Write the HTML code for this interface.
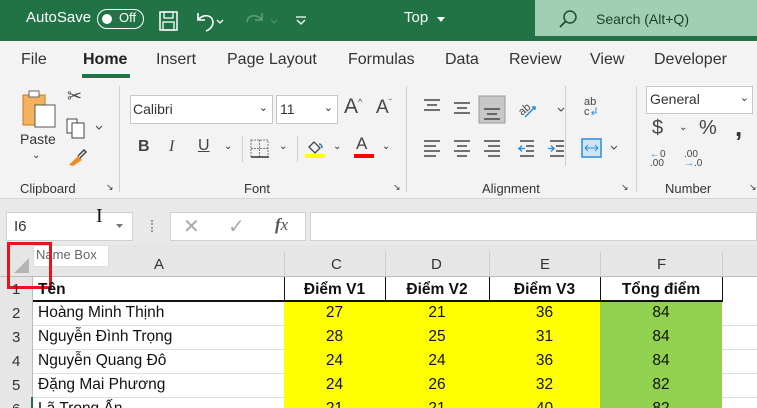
<!DOCTYPE html>
<html style="width:757px;height:408px;overflow:hidden"><head><meta charset="utf-8"><style>
*{box-sizing:border-box;margin:0;padding:0}
body{width:757px;height:408px;overflow:hidden;background:#f3f3f3;font-family:"Segoe UI","Liberation Sans","DejaVu Sans",sans-serif;position:relative;color:#333}
.a{position:absolute}
.t{font-size:16px;color:#333}
.cell{position:absolute;font-size:15.5px;color:#111;font-family:"Liberation Sans",sans-serif}
</style></head><body>
<div class="a" style="left:0;top:0;width:757px;height:41px;background:#217346"></div>
<div class="a" style="left:26px;top:9px;color:#fff;font-size:15px">AutoSave</div>
<div class="a" style="left:97px;top:9px;width:47px;height:20px;border:1.5px solid #fff;border-radius:10px"></div>
<div class="a" style="left:102px;top:14px;width:10px;height:10px;background:#fff;border-radius:50%"></div>
<div class="a" style="left:119px;top:10px;color:#fff;font-size:13px">Off</div>
<svg class="a" style="left:158px;top:10px" width="22" height="22"><rect x="2" y="2" width="17" height="18" fill="none" stroke="#fff" stroke-width="1.5"/><rect x="6" y="2" width="9" height="6" fill="none" stroke="#fff" stroke-width="1.3"/><rect x="5" y="12" width="11" height="8" fill="none" stroke="#fff" stroke-width="1.3"/></svg>
<svg class="a" style="left:194px;top:8px" width="40" height="26"><path d="M4 5v7h7M4 12c5-6 14-6 15 2c0 5-4 8-7 9" fill="none" stroke="#fff" stroke-width="1.6"/><path d="M23 12l3 3l3-3" fill="none" stroke="#fff" stroke-width="1.3"/></svg>
<svg class="a" style="left:242px;top:8px" width="40" height="26"><path d="M20 5v7h-7M20 12c-5-6-14-6-15 2" fill="none" stroke="#5f9d7a" stroke-width="1.6"/><path d="M29 12l3 3l3-3" fill="none" stroke="#4f8d6a" stroke-width="1.3"/></svg>
<svg class="a" style="left:294px;top:14px" width="14" height="14"><path d="M2 3h10M3 6l4 4l4-4" fill="none" stroke="#fff" stroke-width="1.3"/></svg>
<div class="a" style="left:404px;top:9px;color:#fff;font-size:15px">Top</div>
<svg class="a" style="left:437px;top:17px" width="10" height="6"><path d="M0 0h8l-4 5z" fill="#fff"/></svg>
<div class="a" style="left:535px;top:0;width:222px;height:36px;background:#a0cfb3"></div>
<svg class="a" style="left:558px;top:8px" width="22" height="22"><circle cx="12" cy="9" r="6" fill="none" stroke="#1e4f33" stroke-width="1.5"/><path d="M8 13l-6 6" stroke="#1e4f33" stroke-width="1.8"/></svg>
<div class="a" style="left:596px;top:11px;color:#1e3d2b;font-size:14px">Search (Alt+Q)</div>

<div class="a t" style="left:21px;top:51px">File</div>
<div class="a t" style="left:83px;top:51px;font-weight:bold;color:#222">Home</div>
<div class="a" style="left:82px;top:74px;width:48px;height:4px;background:#217346"></div>
<div class="a t" style="left:156px;top:51px">Insert</div>
<div class="a t" style="left:227px;top:51px">Page Layout</div>
<div class="a t" style="left:348px;top:51px">Formulas</div>
<div class="a t" style="left:445px;top:51px">Data</div>
<div class="a t" style="left:509px;top:51px">Review</div>
<div class="a t" style="left:590px;top:51px">View</div>
<div class="a t" style="left:654px;top:51px">Developer</div>

<svg class="a" style="left:20px;top:88px" width="40" height="42"><rect x="3" y="7" width="22" height="30" fill="#f5b25c" stroke="#c87a1e"/><rect x="9" y="3" width="10" height="6" fill="#fff" stroke="#666"/><rect x="15" y="17" width="20" height="22" fill="#fff" stroke="#555"/></svg>
<div class="a" style="left:20px;top:131px;font-size:14px">Paste</div>
<div class="a" style="left:32px;top:150px;font-size:10px">⌄</div>
<div class="a" style="left:67px;top:86px;font-size:18px;color:#444">✂</div>
<svg class="a" style="left:66px;top:118px" width="40" height="22"><rect x="1" y="1" width="10" height="14" fill="#fff" stroke="#444"/><rect x="6" y="5" width="12" height="15" fill="#fff" stroke="#444"/><path d="M30 8l3 3l3-3" fill="none" stroke="#444"/></svg>
<svg class="a" style="left:66px;top:148px" width="22" height="20"><path d="M3 17l9-9l4 4l-9 6z" fill="#f08a24"/><path d="M12 8l6-6l2 2l-6 6" stroke="#444" fill="none" stroke-width="1.5"/></svg>
<div class="a" style="left:20px;top:181px;font-size:13px">Clipboard</div>
<div class="a" style="left:106px;top:182px;font-size:9px">↘</div>
<div class="a" style="left:119px;top:86px;width:1px;height:106px;background:#d0d0d0"></div>
<div class="a" style="left:130px;top:95px;width:143px;height:29px;background:#fff;border:1px solid #c8c8c8;font-size:14px;padding:5px 2px">Calibri<span style="position:absolute;right:4px;font-size:11px">⌄</span></div>
<div class="a" style="left:276px;top:95px;width:62px;height:29px;background:#fff;border:1px solid #c8c8c8;font-size:14px;padding:5px 3px">11<span style="position:absolute;right:4px;font-size:11px">⌄</span></div>
<div class="a" style="left:344px;top:95px;font-size:21px;color:#444">A<sup style="font-size:9px">^</sup></div>
<div class="a" style="left:376px;top:97px;font-size:19px;color:#444">A<sup style="font-size:9px">ˇ</sup></div>
<div class="a" style="left:138px;top:138px;font-size:16px;font-weight:bold;color:#444">B</div>
<div class="a" style="left:169px;top:138px;font-size:16px;font-style:italic;font-family:'Liberation Serif';color:#444">I</div>
<div class="a" style="left:198px;top:137px;font-size:16px;text-decoration:underline;color:#444">U</div>
<div class="a" style="left:224px;top:141px;font-size:10px">⌄</div>
<div class="a" style="left:242px;top:136px;width:1px;height:26px;background:#d0d0d0"></div>
<svg class="a" style="left:250px;top:139px" width="20" height="20"><rect x="1" y="1" width="17" height="17" fill="none" stroke="#777" stroke-dasharray="2 1"/><path d="M9.5 1v17M1 9.5h17" stroke="#777" stroke-dasharray="2 1"/><path d="M1 18h18" stroke="#333" stroke-width="1.5"/></svg>
<div class="a" style="left:279px;top:141px;font-size:10px">⌄</div>
<div class="a" style="left:297px;top:136px;width:1px;height:26px;background:#d0d0d0"></div>
<svg class="a" style="left:305px;top:138px" width="22" height="22"><path d="M4 9l5-5l6 6l-5 5z" fill="none" stroke="#444" stroke-width="1.3"/><path d="M14 6c2 0 3 2 3 4" stroke="#2a78c4" fill="none" stroke-width="1.5"/><rect x="0" y="16" width="20" height="4" fill="#ffff00"/></svg>
<div class="a" style="left:333px;top:141px;font-size:10px">⌄</div>
<div class="a" style="left:356px;top:134px;font-size:17px;color:#444">A</div>
<div class="a" style="left:354px;top:154px;width:20px;height:4px;background:#f00"></div>
<div class="a" style="left:382px;top:141px;font-size:10px">⌄</div>
<div class="a" style="left:244px;top:181px;font-size:13px">Font</div>
<div class="a" style="left:393px;top:182px;font-size:9px">↘</div>
<div class="a" style="left:406px;top:86px;width:1px;height:106px;background:#d0d0d0"></div>
<svg class="a" style="left:420px;top:95px" width="220" height="70">
<g stroke="#444" stroke-width="1.4"><path d="M4 5h16M7 10h10M4 15h16"/><path d="M34 8h16M37 13h10M34 18h16"/></g>
<rect x="59" y="1" width="26" height="27" fill="#c8c8c8" stroke="#999"/>
<g stroke="#444" stroke-width="1.4"><path d="M64 14h16M67 19h10M64 24h16"/>
<path d="M4 46h16M4 51h12M4 56h16M4 61h12"/><path d="M34 46h16M37 51h10M34 56h16M37 61h10"/><path d="M64 46h16M68 51h12M64 56h16M68 61h12"/>
<path d="M100 46h14M106 51h8M106 56h8M100 61h14"/><path d="M130 46h14M136 51h8M136 56h8M130 61h14"/></g>
<path d="M105 53.5h-6l3-3M99 53.5l3 3M128 53.5h6l-3-3M134 53.5l-3 3" stroke="#2a8bd8" fill="none" stroke-width="1.3"/>
<path d="M105 22l10-10M112 12h3v3" stroke="#2a8bd8" fill="none" stroke-width="1.5"/>
<text x="98" y="18" font-size="11" fill="#444" transform="rotate(-40 104 14)" font-family="Liberation Sans">ab</text>
<path d="M138 13l3 3l3-3" fill="none" stroke="#444"/>
</svg>
<div class="a" style="left:565px;top:86px;width:1px;height:80px;background:#d0d0d0"></div>
<div class="a" style="left:584px;top:97px;font-size:11px;line-height:10px;color:#444">ab<br>c<span style="color:#2a8bd8">↲</span></div>
<svg class="a" style="left:581px;top:138px" width="40" height="22"><rect x="1" y="1" width="19" height="18" fill="#cfe4f7" stroke="#2a8bd8" stroke-width="1.5"/><path d="M4 10h13M4 10l3-3M4 10l3 3M17 10l-3-3M17 10l-3 3" stroke="#2a8bd8" fill="none"/><path d="M30 8l3 3l3-3" fill="none" stroke="#444"/></svg>
<div class="a" style="left:482px;top:181px;font-size:13px">Alignment</div>
<div class="a" style="left:621px;top:182px;font-size:9px">↘</div>
<div class="a" style="left:636px;top:86px;width:1px;height:106px;background:#d0d0d0"></div>
<div class="a" style="left:646px;top:86px;width:107px;height:28px;background:#fff;border:1px solid #c8c8c8;font-size:14px;padding:4px 3px">General<span style="position:absolute;right:3px;font-size:11px">⌄</span></div>
<div class="a" style="left:652px;top:117px;font-size:20px;color:#444">$</div>
<div class="a" style="left:679px;top:122px;font-size:10px">⌄</div>
<div class="a" style="left:699px;top:117px;font-size:20px;color:#444">%</div>
<div class="a" style="left:735px;top:112px;font-size:26px;font-weight:bold;color:#333">,</div>
<div class="a" style="left:650px;top:150px;font-size:10px;line-height:9px;color:#444"><span style="color:#2a8bd8">←</span>0<br>.00</div>
<div class="a" style="left:684px;top:150px;font-size:10px;line-height:9px;color:#444">.00<br><span style="color:#2a8bd8">→</span>.0</div>
<div class="a" style="left:665px;top:181px;font-size:13px">Number</div>
<div class="a" style="left:749px;top:182px;font-size:9px">↘</div>
<div class="a" style="left:0;top:198px;width:757px;height:1px;background:#d6d6d6"></div>
<div class="a" style="left:0;top:199px;width:757px;height:46px;background:#e9e9e9"></div>
<div class="a" style="left:6px;top:212px;width:127px;height:29px;background:#fff;border:1px solid #d0d0d0;font-size:15px;padding:5px 7px">I6</div>
<div class="a" style="left:96px;top:205px;font-size:20px;color:#111;font-family:'Liberation Serif'">I</div>
<svg class="a" style="left:116px;top:224px" width="8" height="5"><path d="M0 0h7l-3.5 4z" fill="#777"/></svg>
<div class="a" style="left:151px;top:220px;width:2px;height:12px;border-left:2px dotted #999"></div>
<div class="a" style="left:170px;top:212px;width:136px;height:29px;background:#fff;border:1px solid #d0d0d0"></div>
<div class="a" style="left:183px;top:214px;font-size:20px;color:#aaa">✕</div>
<div class="a" style="left:228px;top:214px;font-size:20px;color:#aaa">✓</div>
<div class="a" style="left:275px;top:215px;font-size:17px;font-style:italic;font-family:'Liberation Serif';color:#555"><b>f</b>x</div>
<div class="a" style="left:310px;top:212px;width:447px;height:29px;background:#fff;border:1px solid #d0d0d0"></div>
<div class="a" style="left:0;top:245px;width:757px;height:163px;background:#fff"></div>
<div class="a" style="left:0;top:245px;width:757px;height:32px;background:#e6e6e6;border-bottom:1px solid #bbb"></div>
<div class="a" style="left:0;top:277px;width:33px;height:131px;background:#e6e6e6;border-right:1px solid #bbb"></div>
<svg class="a" style="left:14px;top:258px" width="16" height="16"><path d="M15 0v15h-15z" fill="#b5b5b5"/></svg>
<div class="a" style="left:33px;top:245px;width:76px;height:22px;background:#fff;border:1px solid #ddd;font-size:13px;color:#666;padding:1px 2px">Name Box</div>
<div class="a" style="left:7px;top:242px;width:45px;height:47px;border:3px solid #e8141a"></div>
<div class="a" style="left:154px;top:256px;font-size:15px">A</div>
<div class="a" style="left:331px;top:256px;font-size:15px">C</div>
<div class="a" style="left:431px;top:256px;font-size:15px">D</div>
<div class="a" style="left:540px;top:256px;font-size:15px">E</div>
<div class="a" style="left:657px;top:256px;font-size:15px">F</div>
<div class="a" style="left:284px;top:252px;width:1px;height:25px;background:#ccc"></div>
<div class="a" style="left:385px;top:252px;width:1px;height:25px;background:#ccc"></div>
<div class="a" style="left:489px;top:252px;width:1px;height:25px;background:#ccc"></div>
<div class="a" style="left:600px;top:252px;width:1px;height:25px;background:#ccc"></div>
<div class="a" style="left:722px;top:252px;width:1px;height:25px;background:#ccc"></div>
<div class="a" style="left:12px;top:281px;font-size:15px">1</div>
<div class="a" style="left:12px;top:305px;font-size:15px">2</div>
<div class="a" style="left:12px;top:329px;font-size:15px">3</div>
<div class="a" style="left:12px;top:353px;font-size:15px">4</div>
<div class="a" style="left:12px;top:377px;font-size:15px">5</div>
<div class="a" style="left:12px;top:401px;font-size:15px">6</div>
<div class="a" style="left:31px;top:397px;width:2px;height:11px;background:#217346"></div>
<div class="a" style="left:284px;top:301px;width:316px;height:107px;background:#ffff00"></div>
<div class="a" style="left:600px;top:301px;width:122px;height:107px;background:#92d050"></div>
<div class="a" style="left:33px;top:325px;width:251px;height:1px;background:#ddd"></div>
<div class="a" style="left:33px;top:349px;width:251px;height:1px;background:#ddd"></div>
<div class="a" style="left:33px;top:373px;width:251px;height:1px;background:#ddd"></div>
<div class="a" style="left:33px;top:397px;width:251px;height:1px;background:#ddd"></div>
<div class="a" style="left:722px;top:325px;width:35px;height:1px;background:#ddd"></div>
<div class="a" style="left:722px;top:349px;width:35px;height:1px;background:#ddd"></div>
<div class="a" style="left:722px;top:373px;width:35px;height:1px;background:#ddd"></div>
<div class="a" style="left:722px;top:397px;width:35px;height:1px;background:#ddd"></div>
<div class="a" style="left:33px;top:300px;width:690px;height:2px;background:#111"></div>
<div class="a" style="left:284px;top:277px;width:1px;height:24px;background:#111"></div>
<div class="a" style="left:385px;top:277px;width:1px;height:24px;background:#111"></div>
<div class="a" style="left:489px;top:277px;width:1px;height:24px;background:#111"></div>
<div class="a" style="left:600px;top:277px;width:1px;height:24px;background:#111"></div>
<div class="a" style="left:722px;top:277px;width:1px;height:24px;background:#111"></div>
<div class="cell" style="left:38px;top:281px;font-weight:bold">Tên</div>
<div class="cell" style="left:284px;width:101px;top:281px;text-align:center;font-weight:bold">Điểm V1</div>
<div class="cell" style="left:385px;width:104px;top:281px;text-align:center;font-weight:bold">Điểm V2</div>
<div class="cell" style="left:489px;width:111px;top:281px;text-align:center;font-weight:bold">Điểm V3</div>
<div class="cell" style="left:600px;width:122px;top:281px;text-align:center;font-weight:bold">Tổng điểm</div>
<div class="cell" style="left:38px;top:304px">Hoàng Minh Thịnh</div>
<div class="cell" style="left:38px;top:328px">Nguyễn Đình Trọng</div>
<div class="cell" style="left:38px;top:352px">Nguyễn Quang Đô</div>
<div class="cell" style="left:38px;top:376px">Đặng Mai Phương</div>
<div class="cell" style="left:38px;top:400px">Lã Trọng Ấn</div>
<div class="cell" style="left:284px;width:101px;text-align:center;line-height:24px;top:301px">27<br>28<br>24<br>24<br>21</div>
<div class="cell" style="left:385px;width:104px;text-align:center;line-height:24px;top:301px">21<br>25<br>24<br>26<br>21</div>
<div class="cell" style="left:489px;width:111px;text-align:center;line-height:24px;top:301px">36<br>31<br>36<br>32<br>40</div>
<div class="cell" style="left:600px;width:122px;text-align:center;line-height:24px;top:301px">84<br>84<br>84<br>82<br>82</div>
</body></html>
